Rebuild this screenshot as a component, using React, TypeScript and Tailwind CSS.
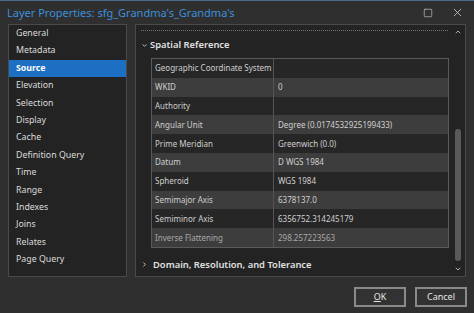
import { ChevronDown, ChevronRight, ChevronUp, Square, X } from 'lucide-react';

const pages = [
  'General',
  'Metadata',
  'Source',
  'Elevation',
  'Selection',
  'Display',
  'Cache',
  'Definition Query',
  'Time',
  'Range',
  'Indexes',
  'Joins',
  'Relates',
  'Page Query',
];

const rows: [string, string][] = [
  ['Geographic Coordinate System', ''],
  ['WKID', '0'],
  ['Authority', ''],
  ['Angular Unit', 'Degree (0.0174532925199433)'],
  ['Prime Meridian', 'Greenwich (0.0)'],
  ['Datum', 'D WGS 1984'],
  ['Spheroid', 'WGS 1984'],
  ['Semimajor Axis', '6378137.0'],
  ['Semiminor Axis', '6356752.314245179'],
  ['Inverse Flattening', '298.257223563'],
];

export default function App() {
  return (
    <div
      className="w-[474px] h-[313px] bg-[#2f2f2f] flex flex-col overflow-hidden border-t border-[#4a6a8a]"
      style={{ fontFamily: '"Noto Sans", "Open Sans", sans-serif' }}
    >
      {/* Title bar */}
      <div className="h-[23px] shrink-0 flex items-center pl-[7px]">
        <span className="text-[11px] text-[#3c8fdc] leading-none">
          Layer Properties: sfg_Grandma's_Grandma's
        </span>
        <div className="ml-auto flex items-center gap-[18px] pr-[10px] text-[#cfcfcf]">
          <Square className="h-[10px] w-[10px]" strokeWidth={1.5} />
          <X className="h-[13px] w-[13px]" strokeWidth={1.5} />
        </div>
      </div>

      <div className="flex gap-[8px] px-[8px] h-[253px] shrink-0">
        {/* Page list */}
        <div className="w-[119px] bg-[#232323] border border-[#4a4a4a]">
          {pages.map((p) => (
            <div
              key={p}
              className={`h-[17.4px] flex items-center pl-[7px] text-[8.8px] ${
                p === 'Source'
                  ? 'bg-[#1c6fc2] text-white font-bold'
                  : 'text-[#dcdcdc]'
              }`}
            >
              {p}
            </div>
          ))}
        </div>

        {/* Content */}
        <div className="flex-1 bg-[#232323] border border-[#4a4a4a] flex overflow-hidden">
          <div className="flex-1 flex flex-col pl-[5px]">
            <div className="shrink-0 mt-[5px] border-t border-dotted border-[#777] mr-[2px]" />
            <div className="shrink-0 h-[25px] flex items-center gap-[2px] mt-[2px]">
              <ChevronDown className="h-[7px] w-[7px] text-[#ccc]" strokeWidth={3} />
              <span className="text-[9.4px] font-semibold text-[#e0e0e0]">Spatial Reference</span>
            </div>
            <div className="shrink-0 ml-[10px] mr-[1px] border border-[#5a5a5a]">
              {rows.map(([k, v], i) => (
                <div
                  key={k}
                  className={`h-[18.8px] flex text-[8px] ${
                    i % 2 === 0 ? 'bg-[#262626]' : 'bg-[#3d3d3d]'
                  } ${i === 9 ? 'text-[#a8a8a8]' : 'text-[#cfcfcf]'}`}
                >
                  <div className="w-[122px] border-r border-[#555] flex items-center pl-[3px] whitespace-nowrap">
                    {k}
                  </div>
                  <div className="flex-1 flex items-center pl-[4px] whitespace-nowrap">{v}</div>
                </div>
              ))}
            </div>
            <div className="shrink-0 h-[22px] mt-[6px] flex items-center gap-[5px]">
              <ChevronRight className="h-[7px] w-[7px] text-[#ccc]" strokeWidth={3} />
              <span className="text-[9.4px] font-semibold text-[#e0e0e0]">
                Domain, Resolution, and Tolerance
              </span>
            </div>
          </div>

          {/* Scrollbar */}
          <div className="w-[15px] flex flex-col items-center py-[3px]">
            <ChevronUp className="h-[8px] w-[8px] text-[#aaa]" strokeWidth={3} />
            <div className="flex-1 w-full flex flex-col justify-end items-center pb-[4px]">
              <div className="w-[6px] h-[132px] rounded-full bg-[#5a5a5a]" />
            </div>
            <ChevronDown className="h-[8px] w-[8px] text-[#aaa]" strokeWidth={3} />
          </div>
        </div>
      </div>

      {/* Buttons */}
      <div className="flex justify-end gap-[9px] pr-[7px] pt-[10px]">
        <button className="w-[52px] h-[20px] border-2 border-[#8a8a8a] bg-[#323232] text-[9px] text-[#e6e6e6]">
          <span className="underline">O</span>K
        </button>
        <button className="w-[52px] h-[20px] border-2 border-[#8a8a8a] bg-[#323232] text-[9px] text-[#e6e6e6]">
          Cancel
        </button>
      </div>
    </div>
  );
}
